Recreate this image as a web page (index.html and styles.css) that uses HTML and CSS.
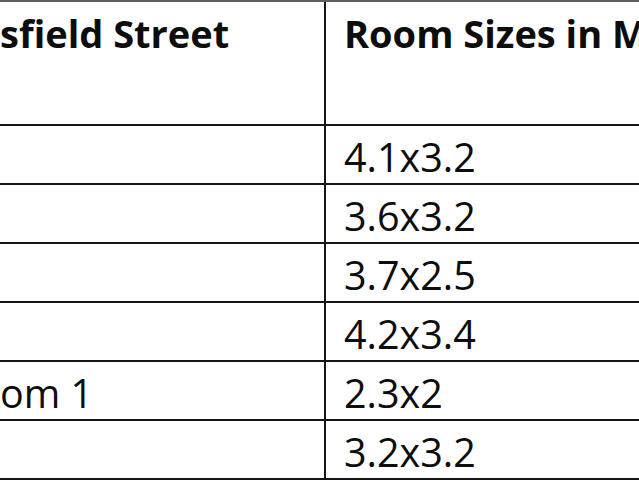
FILE: index.html
```html
<!DOCTYPE html>
<html lang="en">
<head>
<meta charset="utf-8">
<title>Room Sizes</title>
<link rel="stylesheet" href="styles.css">
</head>
<body>
<div class="viewport">
  <div class="sheet">
    <div class="cell left head">sfield Street</div>
    <div class="cell right head">Room Sizes in Metres</div>
    <div class="cell left"></div>
    <div class="cell right">4.1x3.2</div>
    <div class="cell left"></div>
    <div class="cell right">3.6x3.2</div>
    <div class="cell left"></div>
    <div class="cell right">3.7x2.5</div>
    <div class="cell left"></div>
    <div class="cell right">4.2x3.4</div>
    <div class="cell left">om 1</div>
    <div class="cell right">2.3x2</div>
    <div class="cell left"></div>
    <div class="cell right">3.2x3.2</div>
  </div>
</div>
</body>
</html>
```

FILE: styles.css
```css
html, body {
  margin: 0;
  padding: 0;
  background: #ffffff;
  overflow: hidden;
}

.viewport {
  width: 639px;
  height: 480px;
  overflow: hidden;
}

.sheet {
  display: grid;
  grid-template-columns: 326px 420px;
  width: 746px;
  border-top: 2px solid #5e5e5e;
  font-family: "Open Sans", "Liberation Sans", sans-serif;
  font-size: 39.5px;
  color: #0d0d0d;
}

.cell {
  border-bottom: 2px solid #151515;
  padding: 7px 0 2px 0;
  line-height: 48px;
  height: 48px;
  white-space: nowrap;
  overflow: hidden;
}

.cell.head {
  font-weight: 700;
  font-size: 38px;
  height: 113px;
}

.cell.left {
  border-right: 2px solid #151515;
  padding-left: 0;
}

.cell.right {
  padding-left: 18px;
}
```
